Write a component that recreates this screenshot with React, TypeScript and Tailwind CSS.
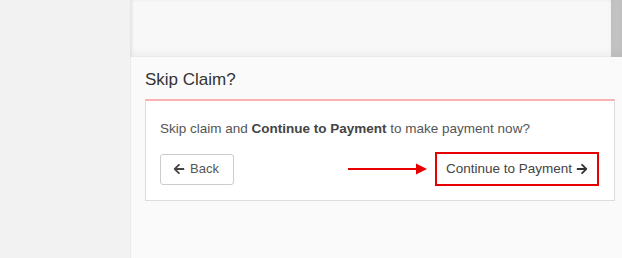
import React from "react";
import { FaArrowLeft, FaArrowRight } from "react-icons/fa";

export default function App() {
  return (
    <div
      className="flex h-[258px] w-[622px] overflow-hidden bg-[#f2f2f2]"
      style={{ fontFamily: '"Liberation Sans", Arial, sans-serif' }}
    >
      <div className="w-[130px] shrink-0 bg-[#f2f2f2]" />
      <div className="flex flex-1 flex-col">
        <div className="flex h-[57px] shrink-0 shadow-[inset_2px_0_3px_rgba(0,0,0,0.07)]">
          <div className="flex-1 bg-[#f8f8f8] shadow-[inset_2px_0_3px_rgba(0,0,0,0.07),inset_0_-5px_6px_rgba(0,0,0,0.035)]" />
          <div className="w-[11px] bg-[#c3c3c3] shadow-[inset_0_-5px_6px_rgba(0,0,0,0.04)]" />
        </div>
        <div className="flex flex-1 flex-col border-l border-[#ececec] bg-[#fafafa] pl-[14px] pr-[7px] pt-[13px]">
          <h2 className="mb-[9px] text-[17px] leading-[20px] text-[#333]">Skip Claim?</h2>
          <div className="border border-t-2 border-[#dddddd] border-t-[#f8b0b0] bg-white pb-[14px] pl-[14px] pr-[15px] pt-[19px]">
            <p className="text-[13.5px] leading-[18px] text-[#555]">
              Skip claim and <b className="font-bold text-[#444]">Continue to Payment</b> to make payment now?
            </p>
            <div className="mt-[14px] flex items-center justify-between">
              <button className="flex h-[31px] w-[74px] items-center gap-[5px] rounded-[3px] border border-[#cccccc] bg-white pl-[12px] text-[13px] text-[#555]">
                <FaArrowLeft className="h-[12px] w-[12px] text-[#444]" />
                <span>Back</span>
              </button>
              <div className="flex items-center gap-[8px]">
                <svg width="79" height="12" viewBox="0 0 79 12">
                  <rect x="0" y="5" width="69" height="2" fill="#e60000" />
                  <polygon points="68,0.5 79,6 68,11.5" fill="#e60000" />
                </svg>
                <button className="flex h-[34px] w-[164px] items-center justify-center gap-[4px] border-2 border-[#e60000] bg-white text-[13.5px] text-[#444]">
                  <span>Continue to Payment</span>
                  <FaArrowRight className="h-[12px] w-[12px] text-[#333]" />
                </button>
              </div>
            </div>
          </div>
        </div>
      </div>
    </div>
  );
}
